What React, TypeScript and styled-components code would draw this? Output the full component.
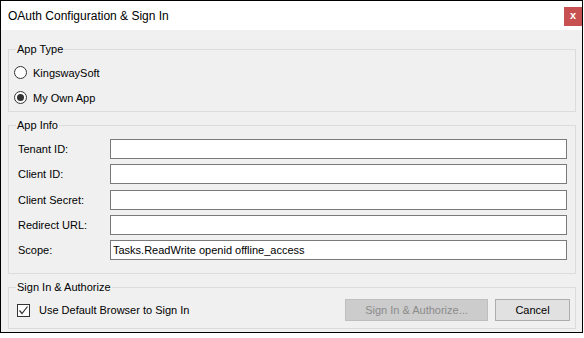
import React from "react";
import styled, { createGlobalStyle } from "styled-components";

const Global = createGlobalStyle`
  html, body { margin: 0; padding: 0; background: #ffffff; }
  body { font-family: "Liberation Sans", Arial, sans-serif; }
`;

const Window = styled.div`
  width: 583px;
  box-sizing: border-box;
  border: 1px solid #000000;
  background: #f0f0f0;
  display: flex;
  flex-direction: column;
`;

const TitleBar = styled.div`
  height: 29px;
  background: #ffffff;
  display: flex;
  justify-content: space-between;
  align-items: flex-start;
  padding-left: 7px;
`;

const Title = styled.div`
  align-self: center;
  font-size: 12px;
  line-height: 14px;
  color: #000000;
`;

const CloseButton = styled.div`
  margin-top: 6px;
  width: 18px;
  height: 19px;
  background: #c75050;
  color: #ffffff;
  font-size: 11px;
  font-weight: bold;
  line-height: 17px;
  text-align: center;
`;

const Body = styled.div`
  display: flex;
  flex-direction: column;
  gap: 7px;
  padding: 13px 6px 3px 7px;
`;

const Group = styled.fieldset`
  margin: 0;
  padding: 0;
  min-width: 0;
  border: 1px solid #dcdcdc;
`;

const Legend = styled.legend`
  margin-left: 7px;
  padding: 0 1px;
  font-size: 11px;
  line-height: 13px;
  color: #000000;
`;

const RadioList = styled.div`
  display: flex;
  flex-direction: column;
  gap: 8px;
  padding: 8px 0 5px 5px;
`;

const OptionRow = styled.label<{ $gap: number }>`
  display: flex;
  align-items: center;
  height: 17px;
  gap: ${(p) => p.$gap}px;
  font-size: 11px;
  color: #000000;
`;

const RadioCircle = styled.span<{ $checked?: boolean }>`
  width: 13px;
  height: 13px;
  box-sizing: border-box;
  border: 1px solid #333333;
  border-radius: 50%;
  background: #ffffff;
  display: flex;
  align-items: center;
  justify-content: center;
  &::after {
    content: "";
    width: 7px;
    height: 7px;
    border-radius: 50%;
    background: ${(p) => (p.$checked ? "#333333" : "transparent")};
  }
`;

const FieldGrid = styled.div`
  display: grid;
  grid-template-columns: 92px 457px;
  row-gap: 5.25px;
  padding: 7px 0 13px 9px;
`;

const FieldLabel = styled.label`
  align-self: center;
  font-size: 11px;
  color: #000000;
`;

const TextBox = styled.input`
  height: 20px;
  width: 100%;
  box-sizing: border-box;
  margin: 0;
  border: 1px solid #7a7a7a;
  border-radius: 0;
  background: #ffffff;
  padding: 0 2px;
  font-family: "Liberation Sans", Arial, sans-serif;
  font-size: 11px;
  color: #000000;
  outline: none;
`;

const ActionRow = styled.div`
  display: flex;
  align-items: center;
  padding: 5px 5px 7px 8px;
`;

const CheckBox = styled.span`
  width: 13px;
  height: 13px;
  box-sizing: border-box;
  border: 1px solid #333333;
  background: #ffffff;
  display: flex;
  align-items: center;
  justify-content: center;
`;

const Buttons = styled.div`
  margin-left: auto;
  display: flex;
  gap: 7px;
`;

const Button = styled.button<{ $width: number }>`
  width: ${(p) => p.$width}px;
  height: 22px;
  box-sizing: border-box;
  margin: 0;
  padding: 0;
  border: 1px solid #adadad;
  background: #e1e1e1;
  color: #000000;
  font-family: "Liberation Sans", Arial, sans-serif;
  font-size: 11px;
  &:disabled {
    border-color: #bfbfbf;
    background: #cccccc;
    color: #8b8b8b;
  }
`;

const fields = [
  { label: "Tenant ID:", value: "" },
  { label: "Client ID:", value: "" },
  { label: "Client Secret:", value: "" },
  { label: "Redirect URL:", value: "" },
  { label: "Scope:", value: "Tasks.ReadWrite openid offline_access" },
];

export default function App() {
  return (
    <>
      <Global />
      <Window>
        <TitleBar>
          <Title>OAuth Configuration &amp; Sign In</Title>
          <CloseButton>x</CloseButton>
        </TitleBar>
        <Body>
          <Group>
            <Legend>App Type</Legend>
            <RadioList>
              <OptionRow $gap={6}>
                <RadioCircle />
                KingswaySoft
              </OptionRow>
              <OptionRow $gap={6}>
                <RadioCircle $checked />
                My Own App
              </OptionRow>
            </RadioList>
          </Group>
          <Group>
            <Legend>App Info</Legend>
            <FieldGrid>
              {fields.map((f) => (
                <React.Fragment key={f.label}>
                  <FieldLabel>{f.label}</FieldLabel>
                  <TextBox readOnly defaultValue={f.value} />
                </React.Fragment>
              ))}
            </FieldGrid>
          </Group>
          <Group>
            <Legend>Sign In &amp; Authorize</Legend>
            <ActionRow>
              <OptionRow $gap={9}>
                <CheckBox>
                  <svg width="11" height="11" viewBox="0 0 11 11">
                    <polyline points="1.5,5.5 4,8.5 9.5,1.5" fill="none" stroke="#333333" strokeWidth="1.2" />
                  </svg>
                </CheckBox>
                Use Default Browser to Sign In
              </OptionRow>
              <Buttons>
                <Button $width={143} disabled>
                  Sign In &amp; Authorize...
                </Button>
                <Button $width={75}>Cancel</Button>
              </Buttons>
            </ActionRow>
          </Group>
        </Body>
      </Window>
    </>
  );
}
